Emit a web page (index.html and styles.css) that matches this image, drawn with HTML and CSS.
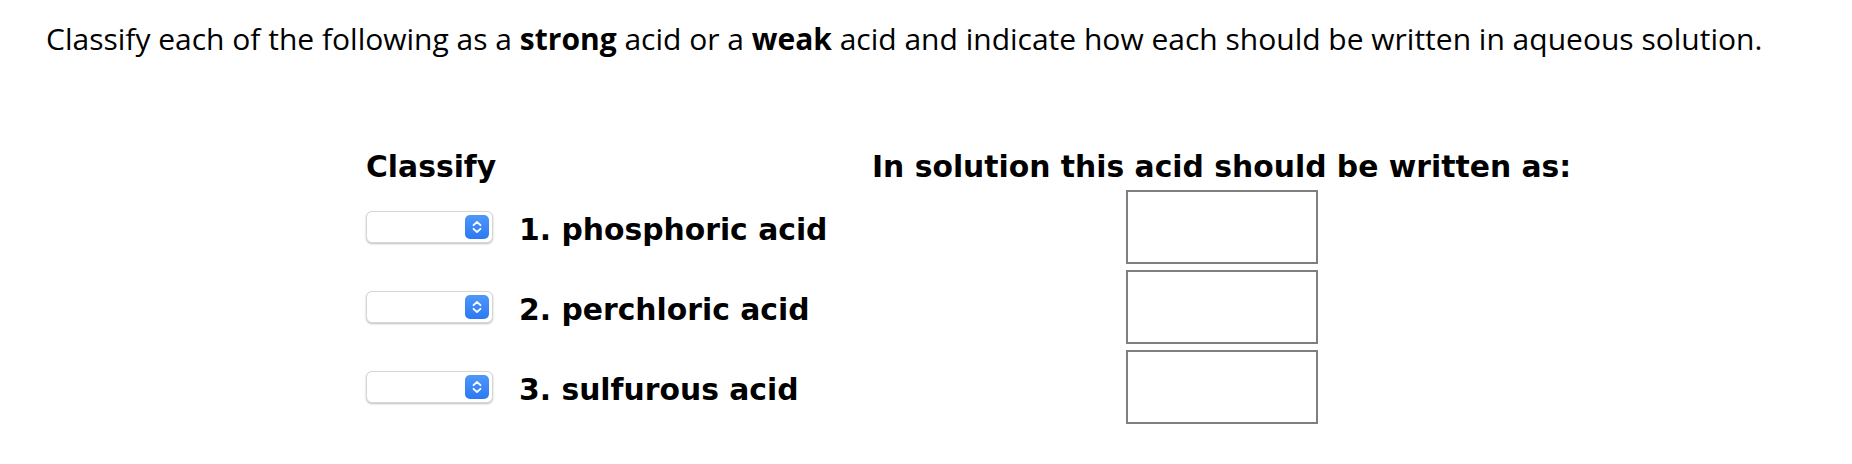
FILE: index.html
```html
<!DOCTYPE html>
<html lang="en">
<head>
<meta charset="utf-8">
<title>Classify acids</title>
<link rel="stylesheet" href="styles.css">
</head>
<body>
<div class="page">
  <p class="prompt">Classify each of the following as a <b>strong</b> acid or a <b>weak</b> acid and indicate how each should be written in aqueous solution.</p>
  <div class="table">
    <div class="head">Classify</div>
    <div class="head head-right">In solution this acid should be written as:</div>

    <div class="row-left">
      <div class="select-wrap">
        <select class="sel"><option></option><option>strong</option><option>weak</option></select>
        <span class="stepper"><svg width="24" height="24" viewBox="0 0 24 24"><path d="M8.5 10.2 L12 7 L15.5 10.2" fill="none" stroke="#fff" stroke-width="1.8" stroke-linecap="round" stroke-linejoin="round"/><path d="M8.5 13.8 L12 17 L15.5 13.8" fill="none" stroke="#fff" stroke-width="1.8" stroke-linecap="round" stroke-linejoin="round"/></svg></span>
      </div>
      <span class="label">1. phosphoric acid</span>
    </div>
    <div class="row-right"><input class="answer" type="text"></div>

    <div class="row-left">
      <div class="select-wrap">
        <select class="sel"><option></option><option>strong</option><option>weak</option></select>
        <span class="stepper"><svg width="24" height="24" viewBox="0 0 24 24"><path d="M8.5 10.2 L12 7 L15.5 10.2" fill="none" stroke="#fff" stroke-width="1.8" stroke-linecap="round" stroke-linejoin="round"/><path d="M8.5 13.8 L12 17 L15.5 13.8" fill="none" stroke="#fff" stroke-width="1.8" stroke-linecap="round" stroke-linejoin="round"/></svg></span>
      </div>
      <span class="label">2. perchloric acid</span>
    </div>
    <div class="row-right"><input class="answer" type="text"></div>

    <div class="row-left">
      <div class="select-wrap">
        <select class="sel"><option></option><option>strong</option><option>weak</option></select>
        <span class="stepper"><svg width="24" height="24" viewBox="0 0 24 24"><path d="M8.5 10.2 L12 7 L15.5 10.2" fill="none" stroke="#fff" stroke-width="1.8" stroke-linecap="round" stroke-linejoin="round"/><path d="M8.5 13.8 L12 17 L15.5 13.8" fill="none" stroke="#fff" stroke-width="1.8" stroke-linecap="round" stroke-linejoin="round"/></svg></span>
      </div>
      <span class="label">3. sulfurous acid</span>
    </div>
    <div class="row-right"><input class="answer" type="text"></div>
  </div>
</div>
</body>
</html>
```

FILE: styles.css
```css
html, body {
  margin: 0;
  padding: 0;
  background: #ffffff;
  color: #000000;
}

.page {
  padding: 19px 0 0 46px;
}

.prompt {
  margin: 0;
  font-family: "Open Sans", "Liberation Sans", sans-serif;
  font-size: 30px;
  line-height: 40px;
  font-weight: 400;
  white-space: nowrap;
}

.prompt b {
  font-weight: 700;
}

.table {
  display: grid;
  grid-template-columns: 506px max-content;
  grid-auto-rows: 74px;
  grid-template-rows: 34px;
  row-gap: 6px;
  margin: 91px 0 0 320px;
  font-family: "DejaVu Sans", Verdana, sans-serif;
  font-weight: 700;
  font-size: 29.8px;
}

.head {
  line-height: 34px;
  white-space: nowrap;
}

.row-left {
  display: flex;
  align-items: center;
  gap: 26px;
}

.row-right {
  display: flex;
  align-items: center;
  justify-content: center;
}

.label {
  line-height: 36px;
  margin-top: 5px;
  white-space: nowrap;
}

.select-wrap {
  position: relative;
  width: 127px;
  height: 32px;
  flex: none;
}

.sel {
  display: block;
  appearance: none;
  -webkit-appearance: none;
  box-sizing: border-box;
  width: 127px;
  height: 32px;
  margin: 0;
  border: 1px solid #d6d6d6;
  border-radius: 6px;
  background: #ffffff;
  box-shadow: 0 1px 2px rgba(0, 0, 0, 0.25);
}

.stepper {
  position: absolute;
  top: 4px;
  right: 4px;
  width: 24px;
  height: 24px;
  border-radius: 5px;
  background: linear-gradient(#4f97f8, #2c78f5);
  display: flex;
  pointer-events: none;
}

.answer {
  box-sizing: border-box;
  width: 192px;
  height: 74px;
  margin: 0;
  border: 2px solid #7f7f7f;
  border-radius: 0;
  background: #ffffff;
  padding: 0 6px;
  font-family: "DejaVu Sans", sans-serif;
  font-size: 20px;
}
```
